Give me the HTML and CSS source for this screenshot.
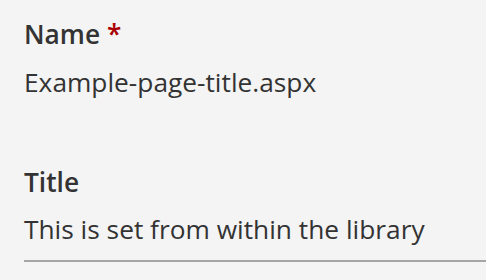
FILE: index.html
```html
<!DOCTYPE html>
<html>
<head>
<meta charset="utf-8">
<link rel="stylesheet" href="styles.css">
</head>
<body>
<div class="form">
  <div class="field">
    <label class="label">Name <span class="req">*</span></label>
    <div class="value">Example-page-title.aspx</div>
  </div>
  <div class="field field-title">
    <label class="label">Title</label>
    <div class="value value-underline">This is set from within the library</div>
  </div>
</div>
</body>
</html>
```
FILE: styles.css
```css
html, body {
  margin: 0;
  padding: 0;
  background: #f4f4f4;
}
body {
  width: 486px;
  height: 280px;
  overflow: hidden;
  font-family: "Open Sans", "Noto Sans", sans-serif;
  color: #333333;
}
.form {
  padding: 16px 0 0 24px;
  display: flex;
  flex-direction: column;
  gap: 64px;
}
.field {
  display: flex;
  flex-direction: column;
}
.label {
  font-size: 26.3px;
  font-weight: 600;
  line-height: 36px;
}
.req {
  color: #a80000;
}
.value {
  font-size: 26.3px;
  line-height: 36px;
  margin-top: 12px;
}
.value-underline {
  margin-top: 11px;
  padding-bottom: 13px;
  border-bottom: 2px solid #a6a6a6;
}
```
